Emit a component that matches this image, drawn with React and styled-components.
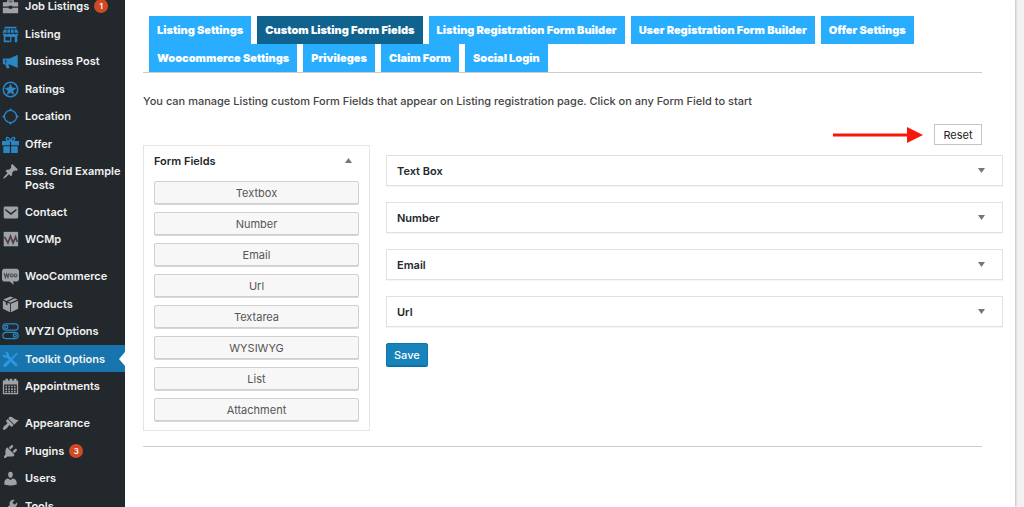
import React, { useState } from 'react';
import styled, { createGlobalStyle } from 'styled-components';

const GlobalStyle = createGlobalStyle`
  *, *::before, *::after {
    box-sizing: border-box;
  }

  body {
    margin: 0;
    background-color: #F1F1F1;
    color: #444444;
    font-family: Inter, "Open Sans", sans-serif;
    font-size: 11px;
  }

  button {
    font-family: inherit;
    cursor: pointer;
  }
`;

const Layout = styled.div`
  display: flex;
  height: 100vh;
  overflow: hidden;
`;

const Sidebar = styled.nav`
  flex: 0 0 125px;
  background-color: #23282D;
  overflow: hidden;
`;

const MenuGroups = styled.div`
  display: flex;
  flex-direction: column;
  gap: 9px;
  margin-top: -8px;
`;

const MenuGroup = styled.ul`
  list-style: none;
  margin: 0;
  padding: 0;
`;

const MenuItem = styled.li`
  min-height: 28px;
  display: flex;

  &:nth-child(even) {
    min-height: 27px;
  }
`;

const MenuLink = styled.a`
  flex: 1;
  position: relative;
  display: flex;
  align-items: flex-start;
  padding: 7px 0 6px 2px;
  color: #F2F2F2;
  background-color: ${({ $active }) => ($active ? '#1874AC' : 'transparent')};
  font-size: 11px;
  font-weight: 600;
  line-height: 14px;
  text-decoration: none;

  ${({ $active }) => $active && `
    &::after {
      content: '';
      position: absolute;
      right: 0;
      top: 50%;
      transform: translateY(-50%);
      border: 7px solid transparent;
      border-left: 0;
      border-right: 6px solid #FFFFFF;
    }
  `}
`;

const MenuIcon = styled.svg`
  flex: 0 0 17px;
  height: 17px;
  margin: -1px 6px -2px 0;
  color: ${({ $blue }) => ($blue ? '#2A86C4' : '#9EA3A8')};
  fill: currentColor;
`;

const Badge = styled.span`
  min-width: 14px;
  height: 14px;
  margin-left: 5px;
  border-radius: 7px;
  background-color: #CF4A22;
  color: #FFFFFF;
  font-size: 8px;
  font-weight: 600;
  line-height: 14px;
  text-align: center;
`;

const Main = styled.main`
  flex: 1;
  min-width: 0;
  margin-right: 9px;
  padding: 16px 12px 0 18px;
  background-color: #FFFFFF;
  box-shadow: 1px 0 2px rgba(0, 0, 0, 0.2);
`;

const Tabs = styled.div`
  display: flex;
  flex-wrap: wrap;
  margin-right: 21px;
  padding-left: 6px;
  column-gap: 6px;
  border-bottom: 1px solid #CCCCCC;
`;

const Tab = styled.button`
  height: 28px;
  padding: 0 8px;
  border: none;
  background-color: ${({ $active }) => ($active ? '#11638F' : '#29ADFF')};
  color: #FFFFFF;
  font-size: 11px;
  font-weight: 900;
`;

const Intro = styled.p`
  margin: 20px 0 15px;
  font-size: 11px;
  font-weight: 500;
  line-height: 16px;
`;

const Toolbar = styled.div`
  display: flex;
  align-items: center;
  justify-content: flex-end;
  gap: 11px;
  margin-right: 21px;
`;

const ResetButton = styled.button`
  width: 48px;
  height: 21px;
  padding: 0;
  border: 1px solid #C4C4C4;
  background-color: #FFFFFF;
  color: #222222;
  font-size: 11px;
`;

const Builder = styled.div`
  display: flex;
  align-items: flex-start;
  gap: 16px;
`;

const Palette = styled.section`
  flex: 0 0 227px;
  padding: 0 10px 9px;
  border: 1px solid #E5E5E5;
`;

const BoxHeader = styled.div`
  display: flex;
  align-items: center;
  justify-content: space-between;
  height: 29px;
`;

const BoxTitle = styled.h2`
  margin: 0;
  color: #23282D;
  font-size: 11px;
  font-weight: 600;
`;

const Toggle = styled.button`
  display: flex;
  align-items: center;
  justify-content: center;
  width: 22px;
  height: 22px;
  padding: 0;
  border: none;
  background: none;
  color: #72777C;

  svg {
    width: 7px;
    height: 5px;
    fill: currentColor;
  }
`;

const FieldList = styled.div`
  display: flex;
  flex-direction: column;
  gap: 8px;
  padding-top: 6px;
`;

const FieldButton = styled.button`
  height: 23px;
  padding: 0;
  border: 1px solid #D0D0D0;
  border-radius: 2px;
  background-color: #F7F7F7;
  box-shadow: 0 1px 0 #D6D6D6;
  color: #555555;
  font-size: 11px;
`;

const FormColumn = styled.form`
  flex: 1;
  min-width: 0;
  display: flex;
  flex-direction: column;
  align-items: stretch;
  gap: 16px;
  padding-top: 10px;
`;

const FormBox = styled.section`
  display: flex;
  align-items: center;
  justify-content: space-between;
  height: 31px;
  padding: 0 10px;
  border: 1px solid #E1E1E1;
  box-shadow: 0 1px 1px rgba(0, 0, 0, 0.04);
`;

const SaveButton = styled.button`
  align-self: flex-start;
  height: 23px;
  padding: 0 7px;
  border: 1px solid #0F76AC;
  border-radius: 2px;
  background-color: #1882BA;
  box-shadow: 0 1px 0 #0F6CA0;
  color: #FFFFFF;
  font-size: 11px;
  font-weight: 500;
`;

const Divider = styled.hr`
  margin: 15px 21px 0 0;
  border: none;
  border-top: 1px solid #CCCCCC;
`;

const icons = {
  jobs: <path d="M6 5V2.500h8V5h5v5h-7V9H8v1H1V5zm2-1v1h4V4zM1 11.500h7v1h4v-1h7V18H1z" />,
  shop: (
    <>
      <path d="M3 1h14v2H3zM2.500 4h3L5 8H.5zm4 0h3v4H6zm4 0h3l.5 4h-3.500zm4 0h3l2 4H15z" />
      <path d="M1 9h4l1 1 1-1h3l1 1 1-1h3l1 1 1-1h2v1.500l-1 1V19h-3v-6h-4v6h-1.500v-6.500H4V17h5v2H2v-7.500l-1-1z" />
    </>
  ),
  megaphone: (
    <path d="M18.500 2v15.500L9 13.500H7.500L9 18H5.500L4 13.500H3L1 13V6.500h8zM4 8v4h1V8z" />
  ),
  star: (
    <>
      <circle cx="10" cy="10" r="8.500" fill="none" stroke="currentColor" strokeWidth="1.800" />
      <path d="M10 3l2 4.700 5 .4-3.800 3.400 1.200 5L10 13.800 5.600 16.500l1.200-5L3 8.100l5-.4z" />
    </>
  ),
  location: (
    <>
      <circle cx="10" cy="10" r="7.200" fill="none" stroke="currentColor" strokeWidth="1.600" />
      <path d="M10 0l2 3H8zM10 20l2-3H8zM0 10l3-2v4zM20 10l-3-2v4z" />
    </>
  ),
  gift: (
    <>
      <path d="M0 6h9.300v5H0zM10.700 6H20v5h-9.300zM1.500 12h7.800v8H1.500zM10.700 12h7.800v8h-7.800z" />
      <path d="M10 6C7 6 4.500 5 5 2.800 6 .5 9 2 10 6c1-4 4-5.500 5-3.200C15.500 5 13 6 10 6z" fill="none" stroke="currentColor" strokeWidth="1.600" />
    </>
  ),
  pin: (
    <path d="M10.440 3.020l1.820-1.820 6.360 6.350-1.830 1.820c-1.050-.68-2.480-.57-3.410.36l-.75.75c-.92.93-1.040 2.350-.35 3.410l-1.830 1.820-2.410-2.410-2.800 2.790c-.42.42-3.380 2.710-3.800 2.290s1.860-3.390 2.280-3.810l2.790-2.790L4.100 9.360l1.830-1.820c1.050.69 2.480.57 3.400-.36l.75-.75c.93-.92 1.050-2.350.36-3.410z" />
  ),
  mail: (
    <path fillRule="evenodd" d="M3 3h15l1 1v12l-1 1H3l-1-1V4zm1 2.500L4 7.500l6.500 5.500L17 7.500l0-2L10.500 10.500z" />
  ),
  wcmp: (
    <>
      <path d="M2 1h17v17H2z" />
      <path d="M3 7l4 7 3-8 3 8 3-7 2 6" fill="none" stroke="#513F4A" strokeWidth="2" />
    </>
  ),
  woo: (
    <>
      <path d="M2 1h16l2 2v11l-2 2h-5l1 4-5-4H2l-2-2V3z" />
      <path d="M2.500 6l1.500 5 1.500-4L7 11l1.500-5" fill="none" stroke="#4A4F54" strokeWidth="1.400" />
      <circle cx="11.500" cy="8.800" r="1.700" fill="none" stroke="#4A4F54" strokeWidth="1.300" />
      <circle cx="16" cy="8.800" r="1.700" fill="none" stroke="#4A4F54" strokeWidth="1.300" />
    </>
  ),
  box: (
    <path d="M10 .5l3.500 1.500-8 4L1.500 4.200zM15 2.700l3.500 1.500L10 8 7 6.800zM1 5.500l3.500 1.500v3l2 1V8l3 1.200V19L1 15zM19 5.500V15l-8.500 4V9.200z" />
  ),
  switches: (
    <g fill="none" stroke="currentColor" strokeWidth="1.500">
      <rect x="1" y="1" width="18" height="7.500" rx="3.700" />
      <circle cx="5" cy="4.700" r="1.800" />
      <rect x="1" y="11" width="18" height="7.500" rx="3.700" />
      <circle cx="15" cy="14.700" r="1.800" />
    </g>
  ),
  toolkit: (
    <g fill="none" stroke="#2E97E0" strokeLinecap="round">
      <path d="M6 5.500L16.500 16.500" strokeWidth="3.400" />
      <path d="M2 5.500c1.500 2 5 1 5-1.500L5.500 2" strokeWidth="2.600" />
      <path d="M17.500 3L11 9.500" strokeWidth="2" />
      <path d="M8 12.500L3.500 17" strokeWidth="3.600" />
    </g>
  ),
  calendar: (
    <path
      fillRule="evenodd"
      d="M2 3h2V1h3v2h2V1h3v2h2V1h3v2h2v16H1V3zm.5 4.500v10h15v-10zM4 9h2v2H4zm3.300 0h2v2h-2zm3.400 0h2v2h-2zM14 9h2v2h-2zM4 12h2v2H4zm3.300 0h2v2h-2zm3.400 0h2v2h-2zM14 12h2v2h-2zM4 15h2v2H4zm3.300 0h2v2h-2zm3.400 0h2v2h-2zM14 15h2v2h-2z"
    />
  ),
  brush: (
    <path d="M14.480 11.060L7.410 3.990l1.500-1.500c.5-.56 2.300-.47 3.510.32 1.210.8 1.430 1.280 2.910 2.100 1.180.64 2.450 1.260 4.450.85zm-.71.71L6.700 4.700 4.930 6.470c-.39.39-.39 1.020 0 1.410l1.060 1.060c.39.39.39 1.030 0 1.420-.6.6-1.430 1.110-2.210 1.690-.35.26-.7.53-1.010.84C1.430 14.230.4 16.080 1.400 17.070c.99 1 2.840-.03 4.180-1.360.31-.31.58-.66.85-1.020.57-.78 1.080-1.610 1.690-2.210.39-.39 1.020-.39 1.410 0l1.060 1.060c.39.39 1.020.39 1.410 0z" />
  ),
  plug: (
    <path d="M13.110 4.360L9.870 7.600 8 5.730l3.240-3.240c.35-.34 1.050-.2 1.560.32.52.51.66 1.210.31 1.550zm-8 1.770l.91-1.120 9.010 9.010-1.190.84c-.71.71-2.630 1.160-3.820 1.160H6.140L4.900 17.260c-.59.59-1.540.59-2.120 0-.59-.58-.59-1.530 0-2.120l1.240-1.240v-3.880c0-1.130.4-3.190 1.090-3.890zm7.260 3.970l3.240-3.240c.34-.35 1.040-.21 1.550.31.52.51.66 1.210.31 1.550l-3.240 3.250z" />
  ),
  user: (
    <path d="M10 9.250c-2.270 0-2.730-3.440-2.730-3.440C7 4.020 7.820 2 9.970 2c2.160 0 2.980 2.020 2.710 3.810 0 0-.41 3.440-2.680 3.440zm0 2.570L12.720 10c2.390 0 4.520 2.330 4.520 4.530v2.490s-3.650 1.130-7.240 1.130c-3.650 0-7.240-1.130-7.240-1.130v-2.490c0-2.250 1.940-4.480 4.470-4.480z" />
  ),
  wrench: (
    <path d="M16.680 9.770c-1.340 1.340-3.300 1.670-4.950.99l-5.410 6.520c-.99.99-2.590.99-3.580 0s-.99-2.590 0-3.570l6.520-5.420c-.68-1.650-.35-3.610.99-4.950 1.280-1.280 3.120-1.620 4.720-1.060l-2.890 2.890 2.820 2.820 2.860-2.870c.53 1.580.18 3.390-1.080 4.650zM3.810 16.210c.4.39 1.040.39 1.430 0 .4-.4.4-1.040 0-1.430-.39-.4-1.030-.4-1.430 0-.39.39-.39 1.030 0 1.430z" />
  ),
};

const menuGroups = [
  [
    { label: 'Job Listings', icon: 'jobs', count: 1 },
    { label: 'Listing', icon: 'shop', blue: true },
    { label: 'Business Post', icon: 'megaphone', blue: true },
    { label: 'Ratings', icon: 'star', blue: true },
    { label: 'Location', icon: 'location', blue: true },
    { label: 'Offer', icon: 'gift', blue: true },
    { label: 'Ess. Grid Example Posts', icon: 'pin' },
    { label: 'Contact', icon: 'mail' },
    { label: 'WCMp', icon: 'wcmp' },
  ],
  [
    { label: 'WooCommerce', icon: 'woo' },
    { label: 'Products', icon: 'box' },
    { label: 'WYZI Options', icon: 'switches', blue: true },
    { label: 'Toolkit Options', icon: 'toolkit', blue: true, active: true },
    { label: 'Appointments', icon: 'calendar' },
  ],
  [
    { label: 'Appearance', icon: 'brush' },
    { label: 'Plugins', icon: 'plug', count: 3 },
    { label: 'Users', icon: 'user' },
    { label: 'Tools', icon: 'wrench' },
  ],
];

const tabs = [
  'Listing Settings',
  'Custom Listing Form Fields',
  'Listing Registration Form Builder',
  'User Registration Form Builder',
  'Offer Settings',
  'Woocommerce Settings',
  'Privileges',
  'Claim Form',
  'Social Login',
];

const fieldTypes = ['Textbox', 'Number', 'Email', 'Url', 'Textarea', 'WYSIWYG', 'List', 'Attachment'];

const formFields = ['Text Box', 'Number', 'Email', 'Url'];

const Caret = ({ up }) => (
  <svg viewBox="0 0 7 5" aria-hidden="true">
    <path d={up ? 'M3.500 0L7 5H0z' : 'M3.500 5L7 0H0z'} />
  </svg>
);

const AdminMenu = () => (
  <Sidebar>
    <MenuGroups>
      {menuGroups.map((group, index) => (
        <MenuGroup key={index}>
          {group.map((item) => (
            <MenuItem key={item.label}>
              <MenuLink href="#" $active={item.active}>
                <MenuIcon viewBox="0 0 20 20" $blue={item.blue} aria-hidden="true">
                  {icons[item.icon]}
                </MenuIcon>
                <span>{item.label}</span>
                {item.count && <Badge>{item.count}</Badge>}
              </MenuLink>
            </MenuItem>
          ))}
        </MenuGroup>
      ))}
    </MenuGroups>
  </Sidebar>
);

const App = () => {
  const [activeTab, setActiveTab] = useState('Custom Listing Form Fields');
  const [paletteOpen, setPaletteOpen] = useState(true);

  return (
    <>
      <GlobalStyle />
      <Layout>
        <AdminMenu />
        <Main>
          <Tabs role="tablist">
            {tabs.map((tab) => (
              <Tab
                key={tab}
                type="button"
                role="tab"
                aria-selected={tab === activeTab}
                $active={tab === activeTab}
                onClick={() => setActiveTab(tab)}
              >
                {tab}
              </Tab>
            ))}
          </Tabs>
          <Intro>
            You can manage Listing custom Form Fields that appear on Listing registration page. Click on any Form Field to start
          </Intro>
          <Toolbar>
            <svg width="90" height="16" viewBox="0 0 90 16" aria-hidden="true">
              <path d="M0 6.500h74V0l16 8-16 8V9.500H0z" fill="#F5190B" />
            </svg>
            <ResetButton type="button">Reset</ResetButton>
          </Toolbar>
          <Builder>
            <Palette>
              <BoxHeader>
                <BoxTitle>Form Fields</BoxTitle>
                <Toggle
                  type="button"
                  aria-label="Toggle form fields"
                  aria-expanded={paletteOpen}
                  onClick={() => setPaletteOpen(!paletteOpen)}
                >
                  <Caret up={paletteOpen} />
                </Toggle>
              </BoxHeader>
              {paletteOpen && (
                <FieldList>
                  {fieldTypes.map((type) => (
                    <FieldButton key={type} type="button">{type}</FieldButton>
                  ))}
                </FieldList>
              )}
            </Palette>
            <FormColumn onSubmit={(e) => e.preventDefault()}>
              {formFields.map((field) => (
                <FormBox key={field}>
                  <BoxTitle>{field}</BoxTitle>
                  <Toggle type="button" aria-label={`Toggle ${field}`}>
                    <Caret />
                  </Toggle>
                </FormBox>
              ))}
              <SaveButton type="submit">Save</SaveButton>
            </FormColumn>
          </Builder>
          <Divider />
        </Main>
      </Layout>
    </>
  );
};

export default App;
